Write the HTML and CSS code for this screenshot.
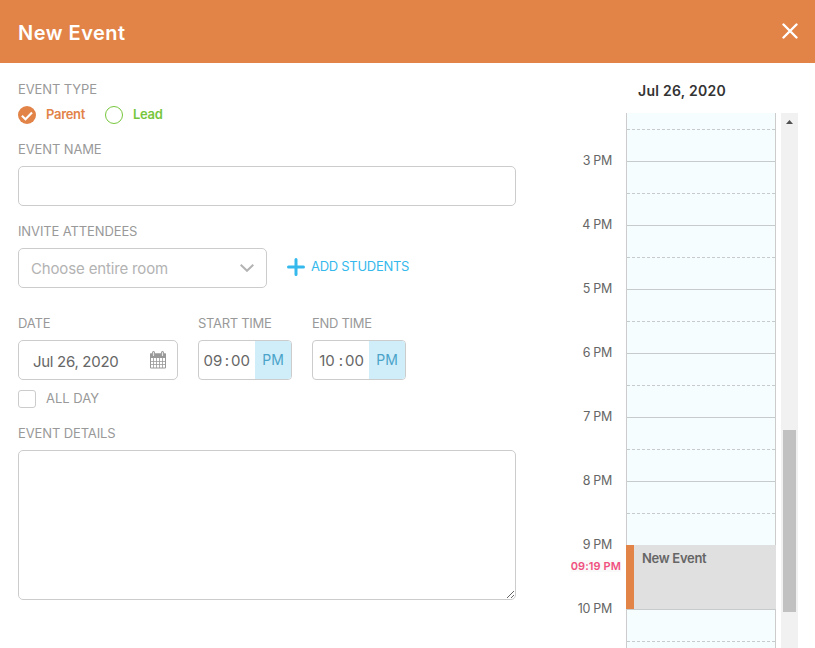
FILE: index.html
```html
<!DOCTYPE html>
<html lang="en">

<head>
    <meta charset="UTF-8">
    <meta name="viewport" content="width=device-width, initial-scale=1.0">
    <title>New Event</title>
    <link rel="stylesheet" href="styles.css">
</head>

<body>

    <header class="modal-header">
        <h1>New Event</h1>
        <button type="button" class="close-btn" aria-label="Close">
            <svg width="16" height="16" viewBox="0 0 16 16">
                <path d="M1.5 1.5L14.5 14.5M14.5 1.5L1.5 14.5" fill="none" stroke="#fff" stroke-width="2.4" stroke-linecap="round" />
            </svg>
        </button>
    </header>

    <main class="modal-body">

        <!-- Event form -->
        <form class="event-form">
            <div class="field">
                <span class="label">EVENT TYPE</span>
                <div class="radio-group">
                    <span class="radio radio-parent">
                        <svg width="18" height="18" viewBox="0 0 18 18">
                            <circle cx="9" cy="9" r="9" fill="#e28348" />
                            <path d="M3.9 9.7L7.5 13.2L14 6.6" fill="none" stroke="#fff" stroke-width="2.2" />
                        </svg>
                        <span>Parent</span>
                    </span>
                    <span class="radio radio-lead">
                        <svg width="18" height="18" viewBox="0 0 18 18">
                            <circle cx="9" cy="9" r="8.5" fill="#fff" stroke="#76c63c" />
                        </svg>
                        <span>Lead</span>
                    </span>
                </div>
            </div>

            <div class="field">
                <label class="label" for="name">EVENT NAME</label>
                <input type="text" id="name" class="box">
            </div>

            <div class="field">
                <span class="label">INVITE ATTENDEES</span>
                <div class="row">
                    <div class="box select">
                        <span>Choose entire room</span>
                        <svg width="14" height="8" viewBox="0 0 14 8">
                            <path d="M0.7 0.8L7 6.8L13.3 0.8" fill="none" stroke="#b3b3b3" stroke-width="2" />
                        </svg>
                    </div>
                    <a class="add-students">
                        <svg width="18" height="18" viewBox="0 0 18 18">
                            <path d="M9 1.5V16.5M1.5 9H16.5" fill="none" stroke="#35b9ec" stroke-width="3" stroke-linecap="round" />
                        </svg>
                        <span>ADD STUDENTS</span>
                    </a>
                </div>
            </div>

            <div class="field field-when">
                <div class="row">
                    <div>
                        <span class="label">DATE</span>
                        <div class="box date">
                            <span>Jul 26, 2020</span>
                            <svg width="18" height="18" viewBox="0 0 18 18">
                                <path d="M1.5 3H16.5V17H1.5Z" fill="#fff" stroke="#999" />
                                <path d="M1 2.5H17V7H1Z" fill="#999" />
                                <path d="M4.5 7V17M7.5 7V17M10.5 7V17M13.5 7V17M1.5 10.5H16.5M1.5 13.5H16.5" stroke="#999" stroke-width="0.8" />
                                <path d="M4.5 1.6V4.4M13.5 1.6V4.4" stroke="#999" stroke-width="3" stroke-linecap="round" />
                                <path d="M4.5 1.6V4.4M13.5 1.6V4.4" stroke="#e4e4e4" stroke-width="1.2" stroke-linecap="round" />
                            </svg>
                        </div>
                    </div>
                    <div>
                        <span class="label label-time">START TIME</span>
                        <div class="box time">
                            <span class="hour">09</span><span class="colon">:</span><span class="minute">00</span>
                            <span class="meridiem">PM</span>
                        </div>
                    </div>
                    <div>
                        <span class="label label-time">END TIME</span>
                        <div class="box time">
                            <span class="hour">10</span><span class="colon">:</span><span class="minute">00</span>
                            <span class="meridiem">PM</span>
                        </div>
                    </div>
                </div>
                <div class="all-day">
                    <span class="checkbox"></span>
                    <span>ALL DAY</span>
                </div>
            </div>

            <div class="field">
                <label class="label" for="details">EVENT DETAILS</label>
                <textarea id="details" class="box"></textarea>
            </div>
        </form>

        <!-- Day schedule -->
        <section class="schedule">
            <h2>Jul 26, 2020</h2>
            <div class="schedule-scroll">
                <div class="hours">
                    <span>3 PM</span>
                    <span>4 PM</span>
                    <span>5 PM</span>
                    <span>6 PM</span>
                    <span>7 PM</span>
                    <span>8 PM</span>
                    <span>9 PM</span>
                    <span>10 PM</span>
                    <div class="now">09:19 PM</div>
                </div>
                <div class="day">
                    <div class="slot slot-first"></div>
                    <div class="slot"></div>
                    <div class="slot"></div>
                    <div class="slot"></div>
                    <div class="slot"></div>
                    <div class="slot"></div>
                    <div class="slot"></div>
                    <div class="slot"></div>
                    <div class="slot"></div>
                    <div class="slot"></div>
                    <div class="slot"></div>
                    <div class="slot"></div>
                    <div class="slot"></div>
                    <div class="slot"></div>
                    <div class="slot"></div>
                    <div class="slot"></div>
                    <div class="slot"></div>
                    <div class="slot"></div>
                    <div class="event"><span>New Event</span></div>
                </div>
                <div class="scrollbar">
                    <svg width="7" height="4" viewBox="0 0 7 4">
                        <path d="M3.5 0L7 4H0Z" fill="#505050" />
                    </svg>
                    <div class="thumb"></div>
                </div>
            </div>
        </section>

    </main>

</body>

</html>
```
FILE: styles.css
```css
* {
    box-sizing: border-box;
}

body {
    margin: 0;
    height: 648px;
    overflow: hidden;
    background-color: #fff;
    color: #666;
    font-family: Inter, "Liberation Sans", sans-serif;
    font-size: 13px;
}

svg {
    display: block;
    flex: none;
}

/* Header */
.modal-header {
    display: flex;
    align-items: center;
    justify-content: space-between;
    height: 63px;
    padding: 3px 17px 0 18px;
    background-color: #e28348;
}

h1 {
    margin: 0;
    color: #fff;
    font-size: 20px;
    font-weight: 600;
    letter-spacing: 0.5px;
}

.close-btn {
    padding: 0;
    margin-bottom: 4px;
    border: none;
    background: none;
}

.modal-body {
    display: flex;
    justify-content: space-between;
    height: 585px;
}

/* Form */
.event-form {
    display: flex;
    flex-direction: column;
    gap: 16px;
    width: 516px;
    padding: 17px 0 0 18px;
}

.label {
    display: block;
    height: 20px;
    margin-bottom: 6px;
    line-height: 18px;
    color: #999;
    letter-spacing: -0.12px;
    white-space: nowrap;
}

.label-time {
    letter-spacing: -0.3px;
}

.box {
    display: block;
    width: 100%;
    height: 40px;
    border: 1px solid #ccc;
    border-radius: 5px;
    background-color: #fff;
}

textarea.box {
    height: 150px;
    resize: both;
}

.row,
.radio-group,
.radio,
.add-students,
.all-day {
    display: flex;
    align-items: center;
}

.row {
    gap: 20px;
}

.radio-group {
    gap: 20px;
    height: 18px;
}

.radio {
    gap: 10px;
    font-weight: 600;
    letter-spacing: -0.3px;
}

.radio-parent {
    color: #e28348;
}

.radio-lead {
    color: #76c63c;
}

.select {
    display: flex;
    align-items: center;
    justify-content: space-between;
    width: 249px;
    padding: 0 12px;
    color: #b3b3b3;
    font-size: 15px;
    letter-spacing: -0.15px;
}

.add-students {
    gap: 6px;
    padding-bottom: 2px;
    color: #35b9ec;
    letter-spacing: -0.28px;
}

.add-students span,
.radio span,
.all-day span:last-child {
    padding-bottom: 2px;
}

.field-when {
    margin-top: 10px;
}

.date {
    display: flex;
    align-items: center;
    justify-content: space-between;
    width: 160px;
    padding: 2px 10px 0 14px;
    font-size: 15px;
    letter-spacing: -0.3px;
}

.date svg {
    margin-bottom: 2px;
}

.time {
    display: flex;
    align-items: center;
    width: 94px;
    padding-left: 4px;
    border-radius: 4px;
    font-size: 15px;
    overflow: hidden;
}

.hour {
    width: 20px;
    text-align: center;
}

.colon {
    width: 8px;
    text-align: center;
}

.minute {
    width: 20px;
}

.meridiem {
    width: 36px;
    margin-left: auto;
    line-height: 38px;
    background-color: #cfeefa;
    color: #4ba3c9;
    font-size: 14px;
    text-align: center;
}

.all-day {
    gap: 10px;
    margin-top: 10px;
    height: 18px;
    color: #999;
}

.checkbox {
    width: 18px;
    height: 18px;
    border: 1px solid #ccc;
    border-radius: 3px;
}

/* Schedule */
.schedule {
    width: 252px;
    padding-top: 18px;
}

.schedule h2 {
    height: 20px;
    margin: 0 0 12px 75px;
    line-height: 20px;
    color: #333;
    font-size: 14px;
    font-weight: 600;
    letter-spacing: 0.27px;
    white-space: nowrap;
}

.schedule-scroll {
    display: flex;
    height: 535px;
    overflow: hidden;
}

.hours {
    position: relative;
    display: flex;
    flex-direction: column;
    width: 63px;
    padding: 16px 14px 0 0;
    font-size: 12.5px;
    letter-spacing: -0.3px;
    text-align: right;
}

.hours span {
    flex: none;
    height: 64px;
    line-height: 64px;
}

/* current time, sits between the hour labels */
.now {
    position: absolute;
    top: 447px;
    right: 5px;
    height: 12px;
    line-height: 12px;
    background-color: #f9f9f9;
    color: #f0507f;
    font-size: 11px;
    font-weight: 600;
    letter-spacing: 0.1px;
    white-space: nowrap;
}

.day {
    position: relative;
    width: 150px;
    border: 1px solid #ccc;
    border-width: 0 1px;
    background-color: #f5fdff;
}

.slot {
    height: 32px;
    border-bottom: 1px solid #c8cbcc;
}

.slot:nth-child(odd) {
    border-bottom-style: dashed;
}

.slot-first {
    height: 17px;
}

.event {
    position: absolute;
    top: 432px;
    left: -1px;
    width: 150px;
    height: 64px;
    padding: 5px 8px;
    border-left: 8px solid #e28348;
    background-color: #e0e0e0;
    font-weight: 600;
    letter-spacing: -0.3px;
    line-height: 16px;
}

.scrollbar {
    display: flex;
    flex-direction: column;
    align-items: center;
    width: 17px;
    margin-left: 5px;
    padding-top: 7px;
    background-color: #f1f1f1;
}

.thumb {
    width: 13px;
    height: 182px;
    margin-top: 306px;
    background-color: #c1c1c1;
}
```
